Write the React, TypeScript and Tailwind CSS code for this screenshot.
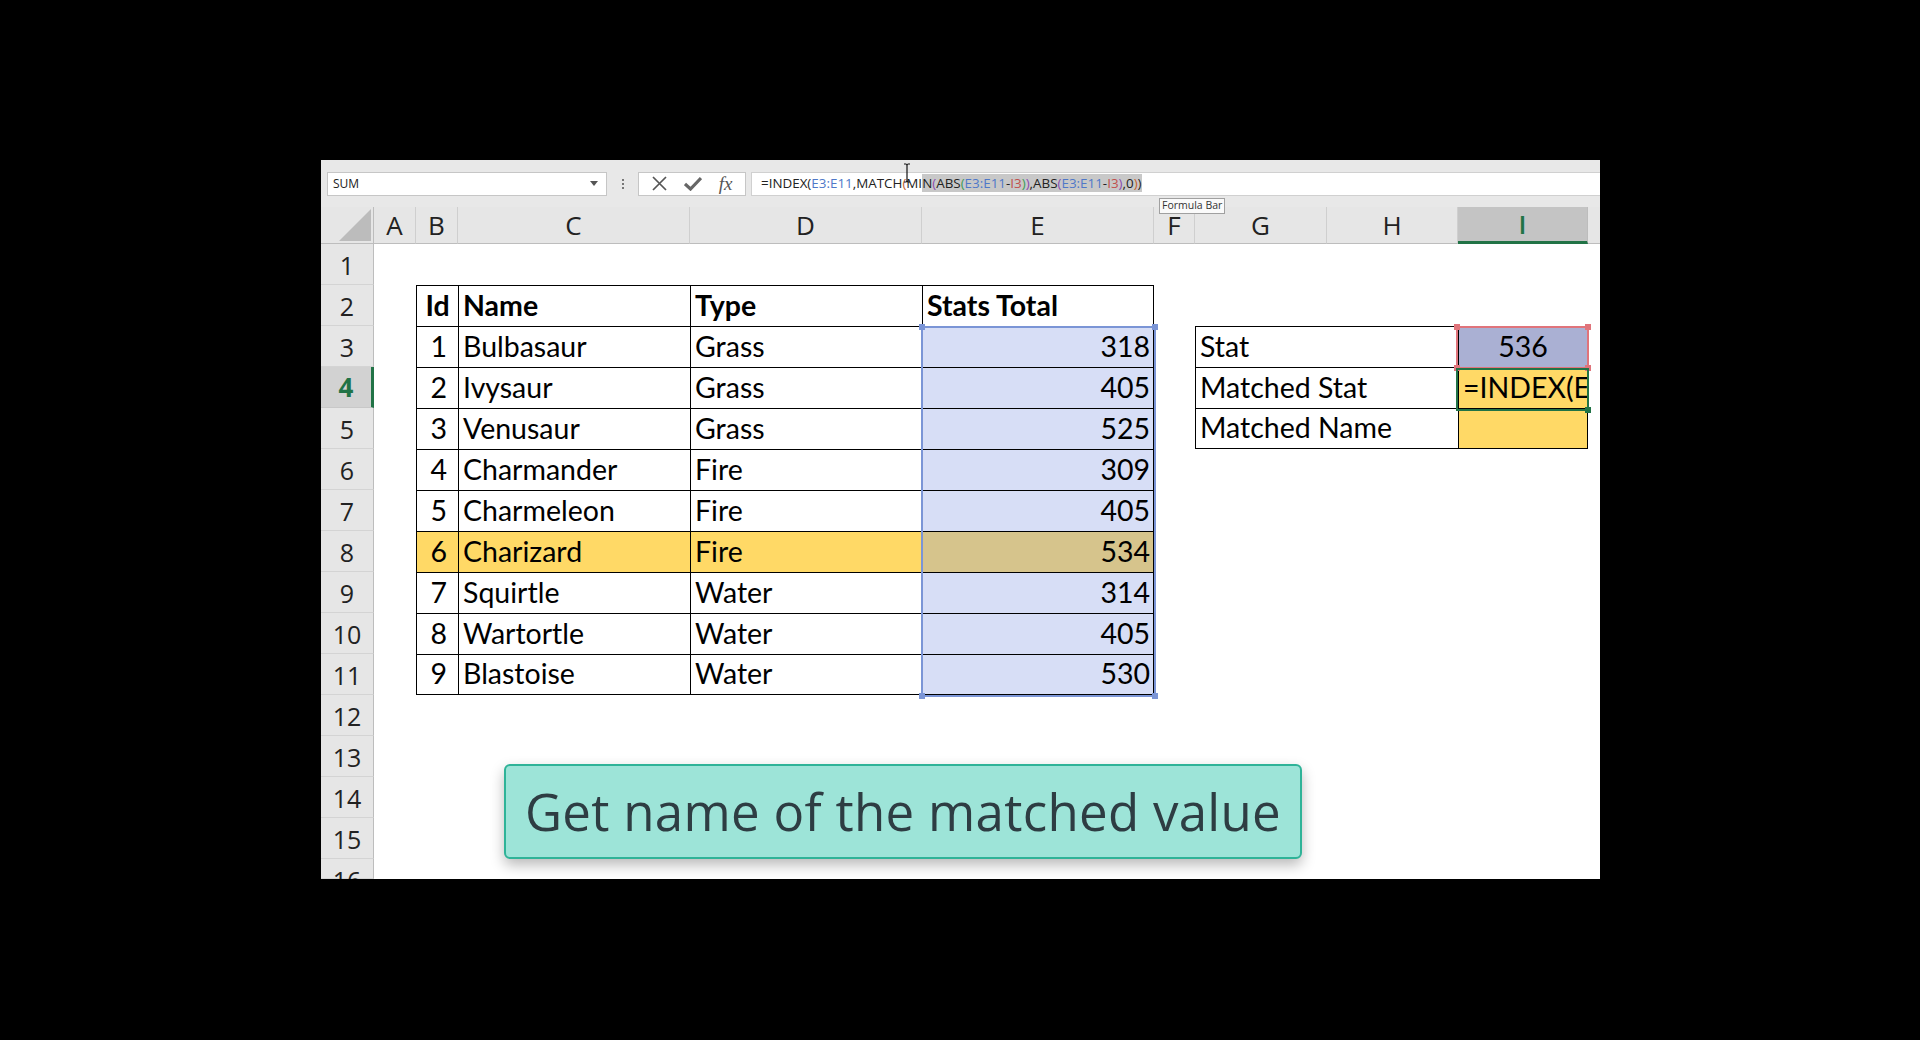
import React from "react";

type Cell = {
  text?: string;
  bold?: boolean;
  align?: "left" | "right" | "center";
  cls?: string; // borders + background
  overflow?: boolean;
  idCol?: boolean;
};

const COLS = ["#", "A", "B", "C", "D", "E", "F", "G", "H", "I", ""];

const pokemon: [string, string, string, string][] = [
  ["1", "Bulbasaur", "Grass", "318"],
  ["2", "Ivysaur", "Grass", "405"],
  ["3", "Venusaur", "Grass", "525"],
  ["4", "Charmander", "Fire", "309"],
  ["5", "Charmeleon", "Fire", "405"],
  ["6", "Charizard", "Fire", "534"],
  ["7", "Squirtle", "Water", "314"],
  ["8", "Wartortle", "Water", "405"],
  ["9", "Blastoise", "Water", "530"],
];

// builds cell content for sheet row r (1-based) and column index c (1 = A ... 9 = I)
function getCell(r: number, c: number): Cell {
  const last = r === 11;
  if (r === 2) {
    if (c === 2) return { text: "Id", bold: true, align: "center", cls: "border-l border-t border-black" };
    if (c === 3) return { text: "Name", bold: true, cls: "border-l border-t border-black" };
    if (c === 4) return { text: "Type", bold: true, cls: "border-l border-t border-black" };
    if (c === 5) return { text: "Stats Total", bold: true, cls: "border-l border-t border-r border-black" };
  }
  if (r >= 3 && r <= 11) {
    const p = pokemon[r - 3];
    const hot = r === 8;
    const bb = last ? " border-b" : "";
    if (c === 2) return { text: p[0], align: "right", idCol: true, cls: `border-l border-t border-black${bb} ${hot ? "bg-[#ffd966]" : ""}` };
    if (c === 3) return { text: p[1], cls: `border-l border-t border-black${bb} ${hot ? "bg-[#ffd966]" : ""}` };
    if (c === 4) return { text: p[2], cls: `border-l border-t border-black${bb} ${hot ? "bg-[#ffd966]" : ""}` };
    if (c === 5) return { text: p[3], align: "right", cls: `border-l border-t border-r border-black${bb} ${hot ? "bg-[#d6c48c]" : "bg-[#d7def6]"}` };
  }
  if (r >= 3 && r <= 5) {
    const bb = r === 5 ? " border-b" : "";
    const labels: Record<number, string> = { 3: "Stat", 4: "Matched Stat", 5: "Matched Name" };
    if (c === 7) return { text: labels[r], overflow: true, cls: `border-l border-t border-black${bb}` };
    if (c === 8) return { cls: `border-t border-black${bb}` };
    if (c === 9) {
      if (r === 3) return { text: "536", align: "center", cls: "border-l border-t border-r border-black bg-[#aab0d3]" };
      if (r === 4) return { text: "=INDEX(E3:E11,MATCH(MIN(ABS(E3:E11-I3)),ABS(E3:E11-I3),0))", cls: "border-l border-t border-r border-black bg-[#ffd966]" };
      return { cls: "border-l border-t border-r border-b border-black bg-[#ffd966]" };
    }
  }
  return {};
}

function Handle({ className }: { className: string }) {
  return <div className={`absolute w-[6px] h-[6px] ${className}`} />;
}

function Formula() {
  return (
    <div className="whitespace-nowrap text-[13.4px] text-[#222]" style={{ fontFamily: '"Open Sans", sans-serif' }}>
      <span>=INDEX(</span>
      <span className="text-[#4f78c8]">E3:E11</span>
      <span>,MATCH</span>
      <span className="text-[#c5602a]">(</span>
      <span>MI</span>
      <span className="bg-[#c8c8c8]">
        <span>N</span>
        <span className="text-[#8a4bb0]">(</span>
        <span>ABS</span>
        <span className="text-[#3a9a57]">(</span>
        <span className="text-[#4f78c8]">E3:E11</span>
        <span>-</span>
        <span className="text-[#c0504d]">I3</span>
        <span className="text-[#3a9a57]">)</span>
        <span className="text-[#8a4bb0]">)</span>
        <span>,ABS</span>
        <span className="text-[#8a4bb0]">(</span>
        <span className="text-[#4f78c8]">E3:E11</span>
        <span>-</span>
        <span className="text-[#c0504d]">I3</span>
        <span className="text-[#8a4bb0]">)</span>
        <span>,0</span>
        <span className="text-[#c5602a]">)</span>
        <span>)</span>
      </span>
    </div>
  );
}

function Toolbar() {
  return (
    <div className="relative h-[47px] flex items-center bg-[#e8e8e8] pl-[6px]">
      <div className="w-[280px] h-[24px] bg-white border border-[#c6c6c6] flex items-center justify-between pl-[5px] pr-[8px]">
        <span className="text-[12px] text-[#222]" style={{ fontFamily: '"Open Sans", sans-serif' }}>SUM</span>
        <svg width="8" height="5" viewBox="0 0 8 5"><path d="M0 0 L8 0 L4 5 Z" fill="#555" /></svg>
      </div>
      <div className="w-[31px] flex flex-col items-center gap-[2px]">
        <div className="w-[2px] h-[2px] bg-[#777]" />
        <div className="w-[2px] h-[2px] bg-[#777]" />
        <div className="w-[2px] h-[2px] bg-[#777]" />
      </div>
      <div className="w-[108px] h-[24px] bg-white border border-[#c6c6c6] flex items-center justify-around px-[4px]">
        <svg width="15" height="15" viewBox="0 0 15 15"><path d="M1 1 L14 14 M14 1 L1 14" stroke="#555" strokeWidth="1.7" /></svg>
        <svg width="18" height="15" viewBox="0 0 18 15"><path d="M1 8 L6.5 13 L17 2" stroke="#666" strokeWidth="3.2" fill="none" /></svg>
        <span className="text-[19px] italic text-[#555] leading-none" style={{ fontFamily: '"Liberation Serif", serif' }}>fx</span>
      </div>
      <div className="ml-[5px] flex-1 h-[24px] bg-white border-y border-l border-[#d0d0d0] flex items-center pl-[9px]">
        <Formula />
      </div>
      {/* text cursor */}
      <svg className="absolute left-[582px] top-[3px]" width="8" height="20" viewBox="0 0 8 20">
        <path d="M1 1 L3 1 Q4 1 4 3 L4 17 Q4 19 3 19 L1 19 M7 1 L5 1 Q4 1 4 3 M4 17 Q4 19 5 19 L7 19" stroke="#111" strokeWidth="1.2" fill="none" />
      </svg>
      {/* tooltip */}
      <div className="absolute left-[838px] top-[38px] z-20 h-[16px] px-[2px] bg-[#fafafa] border border-[#a0a0a0] flex items-center text-[10.5px] text-[#333]" style={{ fontFamily: '"Open Sans", sans-serif' }}>
        Formula Bar
      </div>
    </div>
  );
}

function Sheet() {
  const rows = Array.from({ length: 16 }, (_, i) => i + 1);
  const head = '"Open Sans", "Liberation Sans", sans-serif';
  const body = 'Lato, "Liberation Sans", sans-serif';
  return (
    <div className="relative grid grid-cols-[53px_42px_42px_232px_232px_232px_41px_132px_131px_130px_12px] grid-rows-[37px_repeat(15,41px)_20px] bg-white overflow-hidden">
      {/* column header row */}
      <div className="bg-[#e6e6e6] border-b border-r border-[#bdbdbd] flex items-end justify-end pb-[2px] pr-[2px]">
        <svg width="32" height="32" viewBox="0 0 32 32"><path d="M32 0 L32 32 L0 32 Z" fill="#bcbcbc" /></svg>
      </div>
      {COLS.slice(1).map((l, i) =>
        l === "I" ? (
          <div key={i} className="bg-[#c4c4c4] border-b-[3px] border-b-[#217346] border-r border-r-[#bdbdbd] flex items-center justify-center text-[26px] font-semibold text-[#217346]" style={{ fontFamily: head }}>
            {l}
          </div>
        ) : (
          <div key={i} className={`bg-[#e6e6e6] border-b border-[#bdbdbd] flex items-center justify-center text-[26px] text-[#222] ${l ? "border-r border-r-[#cfcfcf]" : ""}`} style={{ fontFamily: head }}>
            {l}
          </div>
        )
      )}
      {rows.map((r) => (
        <React.Fragment key={r}>
          {r === 4 ? (
            <div className="bg-[#d2d2d2] border-b border-[#c8c8c8] border-r-[3px] border-r-[#217346] flex items-center justify-center text-[26px] font-bold text-[#217346]" style={{ fontFamily: head }}>
              {r}
            </div>
          ) : (
            <div className="bg-[#e6e6e6] border-b border-[#d4d4d4] border-r border-r-[#bdbdbd] flex items-start justify-center pt-[3px] text-[25px] text-[#222]" style={{ fontFamily: head }}>
              {r}
            </div>
          )}
          {COLS.slice(1).map((_, ci) => {
            const c = ci + 1;
            const cell = getCell(r, c);
            const just =
              cell.align === "right"
                ? cell.idCol
                  ? "justify-end pr-[11px]"
                  : "justify-end pr-[3px]"
                : cell.align === "center"
                ? "justify-center"
                : "justify-start pl-[4px]";
            return (
              <div
                key={c}
                className={`flex items-center pb-[2px] whitespace-nowrap text-[28.5px] leading-none text-black ${just} ${cell.overflow ? "overflow-visible z-[1]" : "overflow-hidden"} ${cell.bold ? "font-bold" : ""} ${cell.cls ?? ""}`}
                style={{ fontFamily: body }}
              >
                {cell.text}
              </div>
            );
          })}
        </React.Fragment>
      ))}

      {/* E3:E11 reference highlight */}
      <div className="absolute left-[600px] top-[119px] w-[235px] h-[371px] border-2 border-[#7b95d6] z-10 pointer-events-none">
        <Handle className="-left-[4px] -top-[4px] bg-[#7b95d6]" />
        <Handle className="-right-[4px] -top-[4px] bg-[#7b95d6]" />
        <Handle className="-left-[4px] -bottom-[4px] bg-[#7b95d6]" />
        <Handle className="-right-[4px] -bottom-[4px] bg-[#7b95d6]" />
      </div>
      {/* I3 reference highlight */}
      <div className="absolute left-[1135px] top-[119px] w-[133px] h-[43px] border-2 border-[#e0747b] z-10 pointer-events-none">
        <Handle className="-left-[4px] -top-[4px] bg-[#e0747b]" />
        <Handle className="-right-[4px] -top-[4px] bg-[#e0747b]" />
        <Handle className="-left-[4px] -bottom-[4px] bg-[#e0747b]" />
        <Handle className="-right-[4px] -bottom-[4px] bg-[#e0747b]" />
      </div>
      {/* active cell I4 */}
      <div className="absolute left-[1135px] top-[161px] w-[133px] h-[43px] border-2 border-[#217346] z-10 pointer-events-none">
        <Handle className="-right-[4px] -bottom-[4px] bg-[#217346]" />
      </div>

      {/* caption overlay */}
      <div className="absolute left-[183px] top-[557px] w-[798px] h-[95px] z-20 rounded-[6px] bg-[#9de4d8] border-2 border-[#2fb398] shadow-[0_6px_14px_rgba(0,0,0,0.28)] flex items-center justify-center">
        <span className="text-[51px] font-medium text-[#2e3d43] tracking-[0.3px]" style={{ fontFamily: '"Open Sans", sans-serif' }}>
          Get name of the matched value
        </span>
      </div>
    </div>
  );
}

export default function App() {
  return (
    <div className="w-[1920px] h-[1040px] bg-black pt-[160px] pl-[321px] overflow-hidden">
      <div className="w-[1279px] h-[719px] flex flex-col overflow-hidden">
        <Toolbar />
        <Sheet />
      </div>
    </div>
  );
}
